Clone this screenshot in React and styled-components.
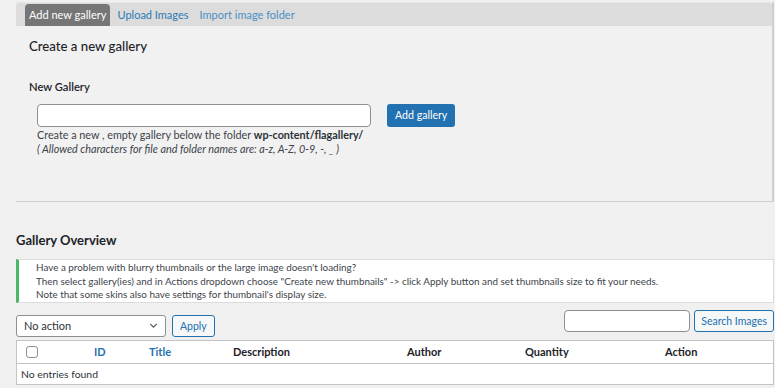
import React from 'react';
import styled, { createGlobalStyle } from 'styled-components';

const Global = createGlobalStyle`
    body {
        margin: 0;
        background: #f0f0f1;
        font-family: Lato, "Noto Sans", sans-serif;
        color: #1d2327;
    }
`;

const Page = styled.div`
    padding: 2px 1px 0 16px;
    width: 775px;
    box-sizing: border-box;
`;

const Panel = styled.div`
    background: #f1f1f1;
    border-top: 1px solid #e6e6e6;
    border-right: 2px solid #cfcfcf;
    border-bottom: 1px solid #d0d0d0;
    height: 200px;
    box-sizing: border-box;
`;

const Tabs = styled.div`
    display: flex;
    align-items: flex-end;
    height: 23px;
    padding-left: 9px;
    background: #dcdcdc;
    border-radius: 3px 3px 0 0;
`;

const Tab = styled.a`
    font-size: 11px;
    height: 22px;
    line-height: 22px;
    padding: 0 4px;
    margin-right: 3px;
    border-radius: 4px 4px 0 0;
    color: ${props => props.active ? '#fff' : props.faded ? '#4b8fc2' : '#2a7ab3'};
    background: ${props => props.active ? '#767676' : 'transparent'};
    text-decoration: none;
    white-space: nowrap;
`;

const Body = styled.div`
    padding: 10px 13px 0;
`;

const Heading = styled.h2`
    margin: 0;
    font-size: 13.2px;
    font-weight: 500;
    line-height: 20px;
`;

const Label = styled.div`
    margin-top: 23px;
    font-size: 11.2px;
    font-weight: 600;
    line-height: 16px;
`;

const FormRow = styled.div`
    display: flex;
    align-items: flex-start;
    gap: 16px;
    margin-top: 9px;
    padding-left: 8px;
`;

const TextInput = styled.div`
    width: ${props => props.width}px;
    height: ${props => props.height}px;
    box-sizing: border-box;
    background: #fff;
    border: 1px solid #8c8f94;
    border-radius: 4px;
`;

const PrimaryButton = styled.div`
    height: 23px;
    padding: 0 8px;
    line-height: 23px;
    font-size: 10.6px;
    color: #fff;
    background: #2271b1;
    border-radius: 3px;
`;

const Help = styled.div`
    padding-left: 8px;
    margin-top: 1px;
    font-size: 10.8px;
    line-height: 14px;
    color: #3c434a;
    b { font-weight: 700; color: #2c3338; }
    i { display: block; }
`;

const SectionTitle = styled.h2`
    margin: 28px 0 0;
    font-size: 13px;
    font-weight: 700;
    line-height: 20px;
`;

const Notice = styled.div`
    margin-top: 9px;
    background: #fff;
    border: 1px solid #dcdcde;
    border-left: 3px solid #4ab866;
    padding: 1px 12px 0 17px;
    font-size: 9.9px;
    line-height: 13.5px;
    color: #3c434a;
`;

const Controls = styled.div`
    display: flex;
    justify-content: space-between;
    align-items: flex-start;
    margin-top: 7px;
`;

const Group = styled.div`
    display: flex;
    gap: ${props => props.gap}px;
    margin-top: ${props => props.top || 0}px;
`;

const Select = styled.div`
    width: 150px;
    height: 22px;
    box-sizing: border-box;
    border: 1px solid #8c8f94;
    border-radius: 3px;
    background: #fff;
    display: flex;
    align-items: center;
    justify-content: space-between;
    padding: 0 6px 0 7px;
    font-size: 11px;
    color: #2c3338;
`;

const SecondaryButton = styled.div`
    height: ${props => props.height}px;
    box-sizing: border-box;
    padding: 0 ${props => props.pad}px;
    display: flex;
    align-items: center;
    border: 1px solid #2271b1;
    border-radius: 3px;
    background: #f6f7f7;
    color: #2271b1;
    font-size: 10.5px;
`;

const Table = styled.div`
    margin-top: 3px;
    background: #fff;
    border: 1px solid #c3c4c7;
`;

const HeadRow = styled.div`
    display: grid;
    grid-template-columns: 77px 55px 84px 174px 118px 140px 1fr;
    align-items: center;
    height: 22px;
    border-bottom: 1px solid #c3c4c7;
    font-size: 11px;
    font-weight: 700;
`;

const Col = styled.div`
    color: ${props => props.link ? '#2271b1' : '#1d2327'};
    white-space: nowrap;
`;

const Check = styled.span`
    display: block;
    width: 12px;
    height: 12px;
    margin-left: 9px;
    box-sizing: border-box;
    border: 1px solid #8c8f94;
    border-radius: 3px;
`;

const EmptyRow = styled.div`
    height: 20px;
    line-height: 20px;
    padding-left: 4px;
    font-size: 10.4px;
    color: #2c3338;
`;

export default function App() {
    return (
        <Page>
            <Global />
            <Panel>
                <Tabs>
                    <Tab active>Add new gallery</Tab>
                    <Tab>Upload Images</Tab>
                    <Tab faded>Import image folder</Tab>
                </Tabs>
                <Body>
                    <Heading>Create a new gallery</Heading>
                    <Label>New Gallery</Label>
                    <FormRow>
                        <TextInput width={334} height={23} />
                        <PrimaryButton>Add gallery</PrimaryButton>
                    </FormRow>
                    <Help>
                        Create a new , empty gallery below the folder <b>wp-content/flagallery/</b>
                        <i>( Allowed characters for file and folder names are: a-z, A-Z, 0-9, -, _ )</i>
                    </Help>
                </Body>
            </Panel>
            <SectionTitle>Gallery Overview</SectionTitle>
            <Notice>
                Have a problem with blurry thumbnails or the large image doesn't loading?<br />
                Then select gallery(ies) and in Actions dropdown choose "Create new thumbnails" -&gt; click Apply button and set thumbnails size to fit your needs.<br />
                Note that some skins also have settings for thumbnail's display size.
            </Notice>
            <Controls>
                <Group gap={6} top={5}>
                    <Select>
                        No action
                        <svg width="11" height="11" viewBox="0 0 20 20">
                            <path d="M4 7l6 6 6-6" fill="none" stroke="#50575e" strokeWidth="2" />
                        </svg>
                    </Select>
                    <SecondaryButton height={22} pad={7}>Apply</SecondaryButton>
                </Group>
                <Group gap={4}>
                    <TextInput width={126} height={22} />
                    <SecondaryButton height={22} pad={6}>Search Images</SecondaryButton>
                </Group>
            </Controls>
            <Table>
                <HeadRow>
                    <Col><Check /></Col>
                    <Col link>ID</Col>
                    <Col link>Title</Col>
                    <Col>Description</Col>
                    <Col>Author</Col>
                    <Col>Quantity</Col>
                    <Col>Action</Col>
                </HeadRow>
                <EmptyRow>No entries found</EmptyRow>
            </Table>
        </Page>
    );
}
